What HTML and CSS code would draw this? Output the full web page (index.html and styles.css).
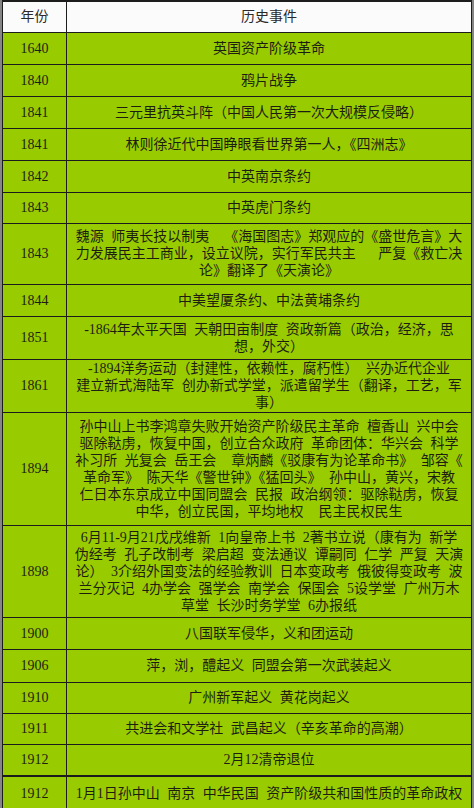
FILE: index.html
```html
<!DOCTYPE html>
<html lang="zh">
<head>
<meta charset="utf-8">
<title>历史事件</title>
<link rel="stylesheet" href="styles.css">
</head>
<body>
<table class="tbl">
  <colgroup><col class="c-year"><col class="c-event"></colgroup>
  <thead>
    <tr class="hd"><td>年份</td><td>历史事件</td></tr>
  </thead>
  <tbody>
    <tr><td>1640</td><td>英国资产阶级革命</td></tr>
    <tr><td>1840</td><td>鸦片战争</td></tr>
    <tr><td>1841</td><td>三元里抗英斗阵（中国人民第一次大规模反侵略）</td></tr>
    <tr><td>1841</td><td>林则徐近代中国睁眼看世界第一人，《四洲志》</td></tr>
    <tr><td>1842</td><td>中英南京条约</td></tr>
    <tr class="h30"><td>1843</td><td>中英虎门条约</td></tr>
    <tr class="h61"><td>1843</td><td>魏源 师夷长技以制夷  《海国图志》郑观应的《盛世危言》大<br>力发展民主工商业，设立议院，实行军民共主   严复《救亡决<br>论》翻译了《天演论》</td></tr>
    <tr><td>1844</td><td>中美望厦条约、中法黄埔条约</td></tr>
    <tr class="h43"><td>1851</td><td>-1864年太平天国 天朝田亩制度 资政新篇（政治，经济，思<br>想，外交）</td></tr>
    <tr class="h53"><td>1861</td><td>-1894洋务运动（封建性，依赖性，腐朽性） 兴办近代企业<br>建立新式海陆军 创办新式学堂，派遣留学生（翻译，工艺，军<br>事）</td></tr>
    <tr class="h113"><td>1894</td><td>孙中山上书李鸿章失败开始资产阶级民主革命 檀香山 兴中会<br>驱除鞑虏，恢复中国，创立合众政府 革命团体：华兴会 科学<br>补习所 光复会 岳王会  章炳麟《驳康有为论革命书》 邹容《<br>革命军》 陈天华《警世钟》《猛回头》 孙中山，黄兴，宋教<br>仁日本东京成立中国同盟会 民报 政治纲领：驱除鞑虏，恢复<br>中华，创立民国，平均地权  民主民权民生</td></tr>
    <tr class="h92"><td>1898</td><td>6月11-9月21戊戌维新 1向皇帝上书 2著书立说（康有为 新学<br>伪经考 孔子改制考 梁启超 变法通议 谭嗣同 仁学 严复 天演<br>论） 3介绍外国变法的经验教训 日本变政考 俄彼得变政考 波<br>兰分灭记 4办学会 强学会 南学会 保国会 5设学堂 广州万木<br>草堂 长沙时务学堂 6办报纸</td></tr>
    <tr><td>1900</td><td>八国联军侵华，义和团运动</td></tr>
    <tr class="h33"><td>1906</td><td>萍，浏，醴起义 同盟会第一次武装起义</td></tr>
    <tr class="h31"><td>1910</td><td>广州新军起义 黄花岗起义</td></tr>
    <tr class="h31"><td>1911</td><td>共进会和文学社 武昌起义（辛亥革命的高潮）</td></tr>
    <tr><td>1912</td><td>2月12清帝退位</td></tr>
    <tr class="last"><td>1912</td><td>1月1日孙中山 南京 中华民国 资产阶级共和国性质的革命政权</td></tr>
  </tbody>
</table>
</body>
</html>
```

FILE: styles.css
```css
html, body {
  margin: 0;
  padding: 0;
}
body {
  background: #858585;
  font-family: "Liberation Serif", "Noto Sans CJK SC", serif;
  overflow: hidden;
}
.tbl {
  border-collapse: collapse;
  table-layout: fixed;
  width: 470px;
  margin-left: 2px;
  border-top: 2px solid #1c1c1c;
}
.c-year { width: 64px; }
.tbl td {
  border: 1px solid #1c1c1c;
  background: #99cc00;
  color: #1c1f10;
  font-size: 14px;
  line-height: 17px;
  text-align: center;
  vertical-align: middle;
  padding: 0 2px;
  white-space: pre;
  word-spacing: 4px;
  height: 32px;
  box-sizing: border-box;
}
.tbl tr.hd td {
  background: #fbfbfb;
  color: #2a2a2a;
  height: 31px;
}
.tbl tr.h30 td { height: 31px; }
.tbl tr.h31 td { height: 31px; }
.tbl tr.h33 td { height: 33px; }
.tbl tr.h43 td { height: 43px; }
.tbl tr.h53 td { height: 53px; }
.tbl tr.h61 td { height: 61px; }
.tbl tr.h92 td { height: 92px; }
.tbl tr.h113 td { height: 113px; }
.tbl tr.last td {
  border-top: 2px solid #1c1c1c;
  height: 35px;
}
```
